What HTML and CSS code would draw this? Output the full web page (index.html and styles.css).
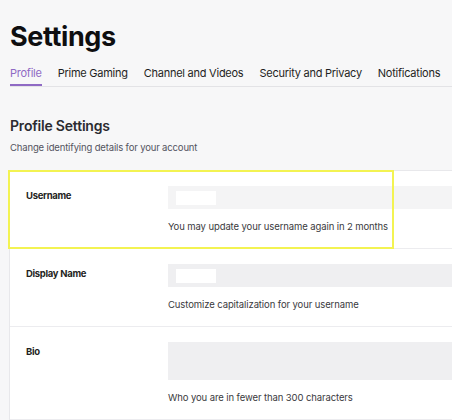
FILE: index.html
```html
<!DOCTYPE html>
<html lang="en">
    <head>
        <meta charset="utf-8" />
        <meta name="viewport" content="width=device-width, initial-scale=1.0" />
        <title>Settings</title>
        <link rel="stylesheet" href="styles.css">
    </head>

    <body>
        <div class="page">
            <h1 class="title">Settings</h1>

            <nav class="tabs">
                <a class="tab active">Profile</a>
                <a class="tab">Prime Gaming</a>
                <a class="tab">Channel and Videos</a>
                <a class="tab">Security and Privacy</a>
                <a class="tab">Notifications</a>
            </nav>

            <h2 class="section-title">Profile Settings</h2>
            <p class="section-sub">Change identifying details for your account</p>

            <div class="card">
                <div class="row">
                    <div class="label">Username</div>
                    <div class="field">
                        <div class="input"><span class="value"></span></div>
                        <p class="help">You may update your username again in 2 months</p>
                    </div>
                    <div class="highlight"></div>
                </div>
                <div class="row">
                    <div class="label">Display Name</div>
                    <div class="field">
                        <div class="input dark"><span class="value"></span></div>
                        <p class="help">Customize capitalization for your username</p>
                    </div>
                </div>
                <div class="row">
                    <div class="label">Bio</div>
                    <div class="field">
                        <div class="input dark textarea"></div>
                        <p class="help">Who you are in fewer than 300 characters</p>
                    </div>
                </div>
            </div>
        </div>
    </body>
</html>
```

FILE: styles.css
```css
html, body {
    margin: 0;
    height: 100%;
    overflow: hidden;
}
body {
    background: #f7f7f8;
    font-family: Inter, "Noto Sans", sans-serif;
    color: #0e0e10;
}
.page {
    padding: 21px 0 0 10px;
}
.title {
    margin: 0;
    font-size: 27px;
    font-weight: 700;
    line-height: 32px;
    letter-spacing: -0.4px;
}
.tabs {
    display: flex;
    gap: 16px;
    margin-top: 13px;
    border-bottom: 1px solid #e3e3e6;
    width: 600px;
}
.tab {
    font-size: 11px;
    letter-spacing: -0.25px;
    color: #1f1f23;
    padding-bottom: 6px;
    white-space: nowrap;
}
.tab.active {
    color: #8f6ac4;
    box-shadow: inset 0 -2px 0 #8f6ac4;
}
.section-title {
    margin: 29px 0 0;
    font-size: 14px;
    font-weight: 600;
    letter-spacing: -0.2px;
    line-height: 20px;
    color: #2b2b30;
}
.section-sub {
    margin: 6px 0 0;
    font-size: 9.5px;
    letter-spacing: -0.15px;
    color: #53535f;
}
.card {
    margin-top: 17px;
    width: 700px;
    margin-left: -1px;
    background: #fff;
    border: 1px solid #e8e8eb;
}
.row {
    position: relative;
    display: flex;
    padding: 15px 0 16px 16px;
    border-bottom: 1px solid #ececef;
}
.label {
    width: 142px;
    font-size: 9.5px;
    letter-spacing: -0.3px;
    font-weight: 700;
    padding-top: 4px;
    color: #1f1f23;
}
.field {
    flex: 1;
}
.input {
    height: 23px;
    background: #f4f4f5;
    position: relative;
}
.input.dark {
    background: #efeff1;
}
.textarea {
    height: 38px;
}
.value {
    display: block;
    position: absolute;
    left: 8px;
    top: 5px;
    width: 40px;
    height: 14px;
    background: #fff;
}
.help {
    margin: 12px 0 0;
    font-size: 9.5px;
    letter-spacing: -0.1px;
    color: #3a3a3d;
}
/* yellow outline drawn over the username row */
.highlight {
    position: absolute;
    left: -2px;
    top: -1px;
    bottom: -1px;
    width: 382px;
    border: 2px solid #f3f352;
}
```
